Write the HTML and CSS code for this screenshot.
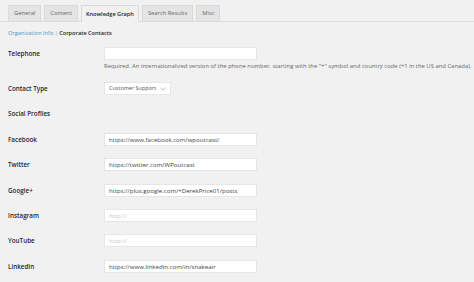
FILE: index.html
```html
<!DOCTYPE html>
<html>
<head>
<meta charset="utf-8">
<link rel="stylesheet" href="styles.css">
</head>
<body>
<div class="tabs">
  <span class="tab">General</span>
  <span class="tab">Content</span>
  <span class="tab active">Knowledge Graph</span>
  <span class="tab">Search Results</span>
  <span class="tab">Misc</span>
</div>
<div class="subnav"><a class="link">Organization Info</a> <span class="sep">|</span> <span class="current">Corporate Contacts</span></div>
<div class="form">
  <div class="row tel">
    <div class="label">Telephone</div>
    <div class="field">
      <div class="input"></div>
      <div class="desc">Required. An internationalized version of the phone number, starting with the "+" symbol and country code (+1 in the US and Canada).</div>
    </div>
  </div>
  <div class="row">
    <div class="label">Contact Type</div>
    <div class="field"><div class="select"><span>Customer Support</span><svg class="chev" width="6" height="4" viewBox="0 0 6 4"><path d="M0.5 0.8 L3 3.2 L5.5 0.8" fill="none" stroke="#999" stroke-width="0.7"/></svg></div></div>
  </div>
  <div class="row">
    <div class="label">Social Profiles</div>
  </div>
  <div class="row">
    <div class="label">Facebook</div>
    <div class="field"><div class="input">https://www.facebook.com/wpoutcast/</div></div>
  </div>
  <div class="row">
    <div class="label">Twitter</div>
    <div class="field"><div class="input">https://twitter.com/WPoutcast</div></div>
  </div>
  <div class="row">
    <div class="label">Google+</div>
    <div class="field"><div class="input">https://plus.google.com/+DerekPrice01/posts</div></div>
  </div>
  <div class="row">
    <div class="label">Instagram</div>
    <div class="field"><div class="input ph">http://</div></div>
  </div>
  <div class="row">
    <div class="label">YouTube</div>
    <div class="field"><div class="input ph">http://</div></div>
  </div>
  <div class="row">
    <div class="label">LinkedIn</div>
    <div class="field"><div class="input">https://www.linkedin.com/in/snakeair</div></div>
  </div>
</div>
</body>
</html>
```
FILE: styles.css
```css
html, body {
  margin: 0;
  padding: 0;
  background: #f1f1f1;
  font-family: "Open Sans", "Noto Sans", sans-serif;
  font-size: 6.5px;
  color: #23282d;
  width: 474px;
  height: 282px;
  overflow: hidden;
}
.tabs {
  display: flex;
  gap: 3px;
  padding: 5px 0 0 8px;
  height: 22px;
  box-sizing: border-box;
  border-bottom: 1px solid #dcdcdc;
  align-items: flex-end;
}
.tab {
  height: 16px;
  box-sizing: border-box;
  line-height: 15px;
  padding: 0 5px;
  background: #e4e4e4;
  border: 1px solid #dadada;
  border-bottom: none;
  color: #666;
  font-size: 5.8px;
  white-space: nowrap;
}
.tab.active {
  background: #f1f1f1;
  color: #23282d;
  font-weight: 600;
  height: 17px;
  margin-bottom: -1px;
  line-height: 16px;
  padding: 0 4px;
  font-size: 5.6px;
}
.subnav {
  padding: 6px 0 0 8px;
  height: 10px;
  line-height: 10px;
  font-size: 5.6px;
}
.subnav .link { color: #4a94c4; }
.subnav .sep { color: #999; }
.subnav .current { font-weight: 600; color: #23282d; }
.form {
  padding: 9px 0 0 8px;
}
.row {
  display: flex;
  height: 25.4px;
}
.row.tel {
  height: 35px;
}
.label {
  width: 96px;
  font-weight: 600;
  font-size: 6.3px;
  line-height: 14px;
}
.field {
  display: flex;
  flex-direction: column;
}
.input {
  width: 153px;
  height: 13px;
  box-sizing: border-box;
  background: #fff;
  border: 1px solid #e6e6e6;
  padding: 0 4px;
  line-height: 11px;
  font-size: 6.1px;
  color: #444;
  white-space: nowrap;
}
.input.ph { color: #c8c8c8; }
.desc {
  margin-top: 2px;
  font-size: 5.9px;
  color: #666;
  white-space: nowrap;
  line-height: 8px;
}
.select {
  width: 67px;
  height: 13px;
  box-sizing: border-box;
  background: #fff;
  border: 1px solid #e6e6e6;
  padding: 0 4px 0 4px;
  line-height: 11px;
  font-size: 5.5px;
  color: #555;
  display: flex;
  align-items: center;
  justify-content: space-between;
  white-space: nowrap;
}
.chev { flex: none; }
```
